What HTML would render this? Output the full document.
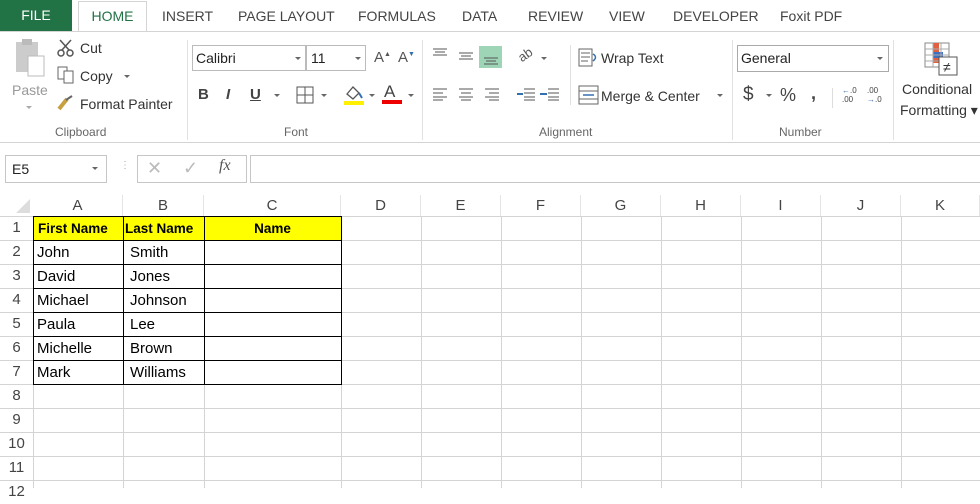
<!DOCTYPE html>
<html><head><meta charset="utf-8"><style>
*{margin:0;padding:0;box-sizing:border-box}
body{width:980px;height:488px;overflow:hidden;background:#fff;font-family:"Liberation Sans",sans-serif;color:#444;position:relative}
.a{position:absolute;white-space:nowrap}
.t{font-size:14px;color:#444;top:8px}
.rb{font-size:14px;color:#333}
.gl{font-size:12px;color:#666;top:125px}
.sep{position:absolute;width:1px;background:#e1e1e1;top:40px;height:100px}
.dd{position:absolute;width:0;height:0;border-left:3px solid transparent;border-right:3px solid transparent;border-top:3px solid #666}
.col{position:absolute;top:195px;height:21px;font-size:15px;color:#444;text-align:center;line-height:21px;border-right:1px solid #e4e4e4}
.rn{position:absolute;left:0;width:33px;height:24px;font-size:15px;color:#444;text-align:center;line-height:24px}
.c{position:absolute;height:24px;font-size:15px;color:#000;line-height:24px;padding-left:4px}
</style></head><body>
<div class="a" style="left:0;top:0;width:72px;height:31px;background:#217346;color:#fff;font-size:14px;line-height:31px;text-align:center">FILE</div>
<div class="a" style="left:78px;top:1px;width:69px;height:31px;border:1px solid #d4d4d4;border-bottom:none;background:#fff;color:#217346;font-size:14px;line-height:29px;text-align:center">HOME</div>
<div class="a" style="left:0;top:31px;width:980px;height:1px;background:#d4d4d4"></div>
<div class="a t" style="left:162px">INSERT</div>
<div class="a t" style="left:238px">PAGE LAYOUT</div>
<div class="a t" style="left:358px">FORMULAS</div>
<div class="a t" style="left:462px">DATA</div>
<div class="a t" style="left:528px">REVIEW</div>
<div class="a t" style="left:609px">VIEW</div>
<div class="a t" style="left:673px">DEVELOPER</div>
<div class="a t" style="left:780px">Foxit PDF</div>
<svg class="a" style="left:14px;top:38px" width="36" height="44"><rect x="2" y="4" width="22" height="30" fill="#ccc"/><rect x="8" y="1" width="10" height="6" fill="#bbb"/><rect x="14" y="18" width="16" height="20" fill="#fff" stroke="#bbb"/></svg>
<div class="a" style="left:12px;top:82px;font-size:14px;color:#999">Paste</div>
<div class="dd" style="left:26px;top:106px;border-top-color:#aaa"></div>
<svg class="a" style="left:57px;top:39px" width="18" height="18"><circle cx="4" cy="14" r="3" fill="none" stroke="#555" stroke-width="1.5"/><circle cx="13" cy="14" r="3" fill="none" stroke="#555" stroke-width="1.5"/><path d="M5 11L14 1M12 11L3 1" stroke="#555" stroke-width="1.5"/></svg>
<div class="a rb" style="left:80px;top:40px">Cut</div>
<svg class="a" style="left:57px;top:66px" width="18" height="18"><rect x="1" y="1" width="9" height="12" fill="#fff" stroke="#666"/><rect x="7" y="5" width="9" height="12" fill="#fff" stroke="#666"/></svg>
<div class="a rb" style="left:80px;top:68px">Copy</div>
<div class="dd" style="left:124px;top:75px"></div>
<svg class="a" style="left:57px;top:95px" width="18" height="16"><path d="M2 14L10 4" stroke="#c8a040" stroke-width="4"/><path d="M9 5L15 1" stroke="#666" stroke-width="2"/></svg>
<div class="a rb" style="left:80px;top:96px">Format Painter</div>
<div class="a gl" style="left:55px">Clipboard</div>
<div class="sep" style="left:187px"></div>
<div class="a" style="left:192px;top:45px;width:114px;height:26px;border:1px solid #bbb;font-size:14px;color:#222;padding:4px 3px">Calibri</div>
<div class="dd" style="left:295px;top:57px"></div>
<div class="a" style="left:306px;top:45px;width:60px;height:26px;border:1px solid #bbb;font-size:14px;color:#222;padding:4px 4px">11</div>
<div class="dd" style="left:355px;top:57px"></div>
<div class="a" style="left:374px;top:49px;font-size:15px;color:#555">A<sup style="font-size:7px">▲</sup></div>
<div class="a" style="left:398px;top:49px;font-size:15px;color:#555">A<sup style="font-size:7px;color:#3470b0">▼</sup></div>
<div class="a" style="left:198px;top:86px;font-size:15px;font-weight:bold;color:#444">B</div>
<div class="a" style="left:226px;top:86px;font-size:15px;font-weight:bold;font-style:italic;color:#444">I</div>
<div class="a" style="left:250px;top:86px;font-size:15px;font-weight:bold;text-decoration:underline;color:#444">U</div>
<div class="dd" style="left:274px;top:94px"></div>
<svg class="a" style="left:296px;top:86px" width="18" height="18"><rect x="1" y="1" width="16" height="16" fill="none" stroke="#555"/><path d="M9 1V17M1 9H17" stroke="#555"/></svg>
<div class="dd" style="left:321px;top:94px"></div>
<svg class="a" style="left:343px;top:84px" width="22" height="22"><path d="M4 10L10 3L16 9L10 15Z" fill="#fff" stroke="#555" stroke-width="1.3"/><path d="M16 9l3 5" stroke="#3470b0" stroke-width="2"/><rect x="1" y="17" width="20" height="4" fill="#ffef00"/></svg>
<div class="dd" style="left:369px;top:94px"></div>
<div class="a" style="left:384px;top:82px;font-size:17px;color:#444">A</div>
<div class="a" style="left:382px;top:100px;width:20px;height:4px;background:#e00"></div>
<div class="dd" style="left:408px;top:94px"></div>
<div class="a gl" style="left:284px">Font</div>
<div class="sep" style="left:422px"></div>
<svg class="a" style="left:430px;top:46px" width="72" height="22"><g stroke="#555"><path d="M3 3H17M5 6H15M3 9H17"/><path d="M29 7H43M31 10H41M29 13H43"/></g><rect x="49" y="0" width="24" height="22" fill="#9fd5b7"/><path d="M54 12H68M56 15H66M54 18H68" stroke="#555"/></svg>
<div class="a" style="left:518px;top:47px;font-size:13px;color:#555;transform:rotate(-35deg)">ab</div>
<div class="dd" style="left:541px;top:57px"></div>
<svg class="a" style="left:430px;top:86px" width="72" height="16"><g stroke="#555"><path d="M3 3H17M3 7H13M3 11H17M3 14H13M29 3H43M31 7H41M29 11H43M31 14H41M55 3H69M59 7H69M55 11H69M59 14H69"/></g></svg>
<svg class="a" style="left:516px;top:86px" width="46" height="16"><g stroke="#555"><path d="M8 3H19M8 7H19M8 11H19M8 14H19M32 3H43M32 7H43M32 11H43M32 14H43"/></g><path d="M1 8H7M24 8H31" stroke="#3470b0" stroke-width="2"/></svg>
<div class="a" style="left:570px;top:45px;width:1px;height:60px;background:#e1e1e1"></div>
<svg class="a" style="left:578px;top:48px" width="22" height="20"><rect x="1" y="1" width="13" height="17" fill="#fff" stroke="#666"/><path d="M3 5H12M3 9H12M3 13H10" stroke="#666"/><path d="M15 6q5 3 0 7" stroke="#3470b0" fill="none" stroke-width="1.5"/></svg>
<div class="a rb" style="left:601px;top:50px">Wrap Text</div>
<svg class="a" style="left:578px;top:85px" width="22" height="20"><rect x="1" y="1" width="19" height="18" fill="#fff" stroke="#666"/><path d="M1 6H20M1 14H20" stroke="#666"/><path d="M5 10H16" stroke="#3470b0" stroke-width="1.5"/></svg>
<div class="a rb" style="left:601px;top:88px">Merge &amp; Center</div>
<div class="dd" style="left:717px;top:94px"></div>
<div class="a gl" style="left:539px">Alignment</div>
<div class="sep" style="left:732px"></div>
<div class="a" style="left:737px;top:45px;width:152px;height:27px;border:1px solid #aaa;font-size:14px;color:#222;padding:4px 3px">General</div>
<div class="dd" style="left:877px;top:57px"></div>
<div class="a" style="left:743px;top:84px;font-size:19px;color:#444">$</div>
<div class="dd" style="left:766px;top:94px"></div>
<div class="a" style="left:780px;top:85px;font-size:18px;color:#444">%</div>
<div class="a" style="left:811px;top:83px;font-size:18px;font-weight:bold;color:#444">,</div>
<div class="a" style="left:832px;top:88px;width:1px;height:20px;background:#ddd"></div>
<div class="a" style="left:842px;top:86px;font-size:8px;line-height:9px;color:#444"><span style="color:#3470b0">←</span>.0<br>.00</div>
<div class="a" style="left:867px;top:86px;font-size:8px;line-height:9px;color:#444">.00<br><span style="color:#3470b0">→</span>.0</div>
<div class="a gl" style="left:779px">Number</div>
<div class="sep" style="left:893px"></div>
<svg class="a" style="left:924px;top:42px" width="34" height="36"><g stroke="#888" fill="#fff"><rect x="1" y="1" width="24" height="24"/></g><rect x="9" y="1" width="6" height="9" fill="#e06040"/><rect x="9" y="10" width="10" height="6" fill="#4070c0"/><rect x="9" y="16" width="6" height="5" fill="#e06040"/><path d="M1 7H25M1 13H25M1 19H25M9 1V25M17 1V25" stroke="#aaa"/><rect x="15" y="15" width="18" height="18" fill="#fff" stroke="#555"/><text x="19" y="30" font-size="14" fill="#333">≠</text></svg>
<div class="a" style="left:902px;top:81px;font-size:14px;color:#333">Conditional</div>
<div class="a" style="left:900px;top:102px;font-size:14px;color:#333">Formatting ▾</div>
<div class="a" style="left:0;top:142px;width:980px;height:1px;background:#d4d4d4"></div>
<div class="a" style="left:5px;top:155px;width:102px;height:28px;border:1px solid #c6c6c6;font-size:14px;color:#222;padding:5px 6px">E5</div>
<div class="dd" style="left:92px;top:167px"></div>
<div class="a" style="left:120px;top:160px;font-size:10px;color:#aaa">⋮</div>
<div class="a" style="left:137px;top:155px;width:110px;height:28px;border:1px solid #c6c6c6"></div>
<div class="a" style="left:147px;top:158px;font-size:18px;color:#bbb">✕</div>
<div class="a" style="left:183px;top:158px;font-size:18px;color:#bbb">✓</div>
<div class="a" style="left:219px;top:157px;font-size:16px;font-style:italic;font-family:'Liberation Serif',serif;color:#555">fx</div>
<div class="a" style="left:250px;top:155px;width:740px;height:28px;border:1px solid #c6c6c6"></div>
<svg class="a" style="left:0;top:195px" width="980" height="293">
<path d="M16 18L30 4V18Z" fill="#ddd"/>
<g stroke="#d4d4d4" stroke-width="1">
<path d="M33.5 21V293M123.5 21V293M204.5 21V293M341.5 21V293M421.5 21V293M501.5 21V293M581.5 21V293M661.5 21V293M741.5 21V293M821.5 21V293M901.5 21V293"/>
<path d="M0 21.5H980M0 45.5H980M0 69.5H980M0 93.5H980M0 117.5H980M0 141.5H980M0 165.5H980M0 189.5H980M0 213.5H980M0 237.5H980M0 261.5H980M0 285.5H980"/>
</g>
<rect x="33" y="21" width="308" height="24" fill="#ffff00"/>
<g stroke="#000" stroke-width="1" fill="none">
<rect x="33.5" y="21.5" width="308" height="168"/>
<path d="M123.5 21V190M204.5 21V190M33 45.5H341M33 69.5H341M33 93.5H341M33 117.5H341M33 141.5H341M33 165.5H341"/>
</g>
</svg>
<div class="col" style="left:33px;width:90px">A</div>
<div class="col" style="left:123px;width:81px">B</div>
<div class="col" style="left:204px;width:137px">C</div>
<div class="col" style="left:341px;width:80px">D</div>
<div class="col" style="left:421px;width:80px">E</div>
<div class="col" style="left:501px;width:80px">F</div>
<div class="col" style="left:581px;width:80px">G</div>
<div class="col" style="left:661px;width:80px">H</div>
<div class="col" style="left:741px;width:80px">I</div>
<div class="col" style="left:821px;width:80px">J</div>
<div class="col" style="left:901px;width:79px">K</div>
<div class="rn" style="top:216px">1</div><div class="rn" style="top:240px">2</div><div class="rn" style="top:264px">3</div><div class="rn" style="top:288px">4</div><div class="rn" style="top:312px">5</div><div class="rn" style="top:336px">6</div><div class="rn" style="top:360px">7</div><div class="rn" style="top:384px">8</div><div class="rn" style="top:408px">9</div><div class="rn" style="top:432px">10</div><div class="rn" style="top:456px">11</div><div class="rn" style="top:480px">12</div>
<div class="c" style="left:34px;top:217px;font-weight:bold;font-size:13.5px">First Name</div>
<div class="c" style="left:122px;top:217px;font-weight:bold;font-size:13.5px;padding-left:3px">Last Name</div>
<div class="c" style="left:204px;top:217px;width:137px;text-align:center;font-weight:bold;font-size:13.5px;padding:0">Name</div>
<div class="c" style="left:33px;top:241px">John</div><div class="c" style="left:126px;top:241px">Smith</div>
<div class="c" style="left:33px;top:265px">David</div><div class="c" style="left:126px;top:265px">Jones</div>
<div class="c" style="left:33px;top:289px">Michael</div><div class="c" style="left:126px;top:289px">Johnson</div>
<div class="c" style="left:33px;top:313px">Paula</div><div class="c" style="left:126px;top:313px">Lee</div>
<div class="c" style="left:33px;top:337px">Michelle</div><div class="c" style="left:126px;top:337px">Brown</div>
<div class="c" style="left:33px;top:361px">Mark</div><div class="c" style="left:126px;top:361px">Williams</div>
</body></html>
